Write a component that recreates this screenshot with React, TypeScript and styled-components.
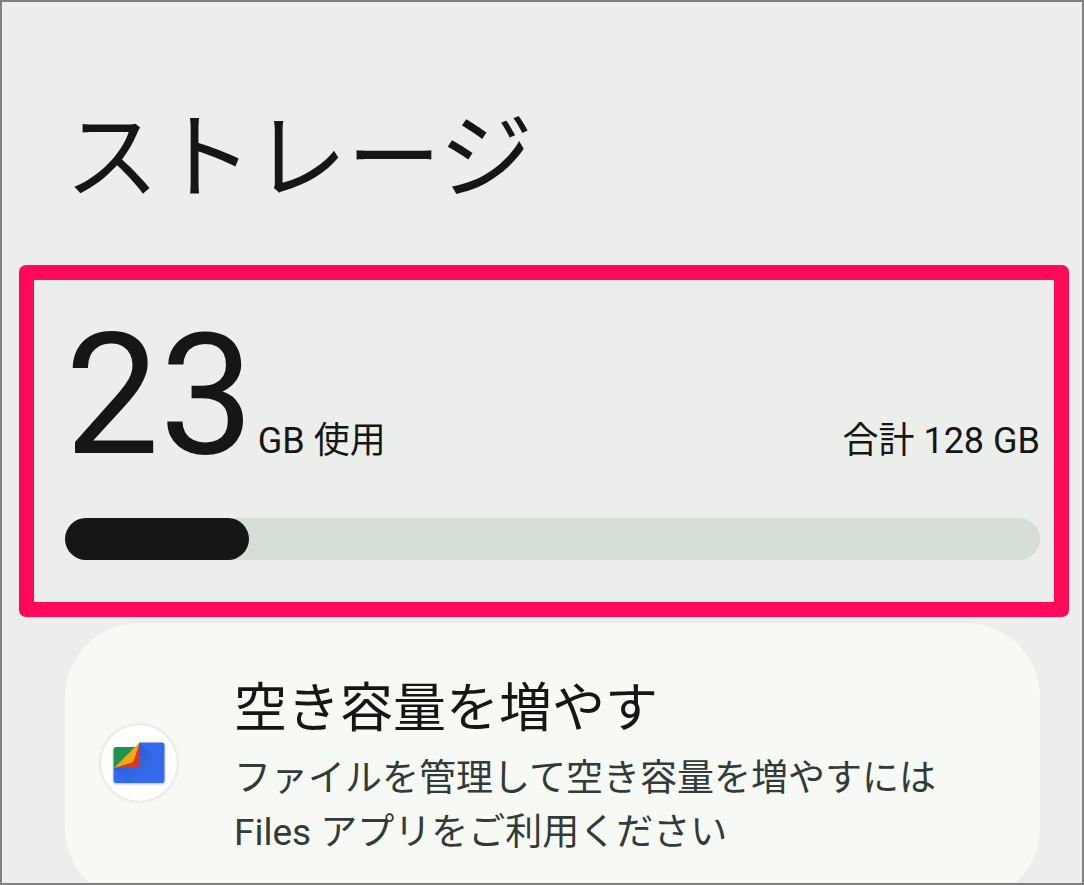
import React from "react";
import styled, { createGlobalStyle } from "styled-components";

const GlobalStyle = createGlobalStyle`
  * { box-sizing: border-box; }
  body {
    margin: 0;
    background: #ebeeeb;
    font-family: Roboto, "Noto Sans CJK JP", sans-serif;
    color: #151715;
  }
`;

const Screen = styled.main`
  height: 100vh;
  overflow: hidden;
  border: 2px solid #808080;
  background: #ebeeeb;
`;

const PageTitle = styled.h1`
  margin: 0;
  padding: 88px 63px 55px;
  font-family: "Noto Sans CJK JP", sans-serif;
  font-size: 94px;
  font-weight: 400;
  line-height: 120px;
`;

const Usage = styled.section`
  margin: 0 13px 0 17px;
  padding: 36px 14px 42px 31px;
  border: 15px solid #ff0a5a;
  border-radius: 7px;
`;

const Figures = styled.div`
  display: flex;
  align-items: baseline;
  justify-content: space-between;
  margin-bottom: 42px;
  font-size: 36px;
  line-height: 40px;
`;

const Figure = styled.p`
  display: flex;
  align-items: baseline;
  gap: 4px;
  margin: 0;
  white-space: nowrap;
`;

const UsedAmount = styled.span`
  font-size: 168px;
  line-height: 160px;
`;

const Track = styled.div`
  height: 42px;
  border-radius: 21px;
  background: #d5dfd7;
`;

const Fill = styled.div`
  height: 100%;
  border-radius: 21px;
  background: #151715;
`;

const Card = styled.a`
  display: flex;
  align-items: center;
  gap: 57px;
  margin: 6px 42px 0 63px;
  padding: 42px 36px;
  border-radius: 74px;
  background: #f7f9f4;
  color: inherit;
  text-decoration: none;
`;

const IconDisc = styled.span`
  flex: none;
  display: flex;
  width: 76px;
  height: 76px;
  border-radius: 50%;
  background: #ffffff;
  box-shadow: 0 0 4px rgba(0, 0, 0, 0.16);
`;

const CardTitle = styled.h2`
  margin: 0 0 9px;
  font-family: "Noto Sans CJK JP", sans-serif;
  font-size: 53px;
  font-weight: 400;
  line-height: 78px;
`;

const CardText = styled.p`
  margin: 0;
  font-size: 37px;
  line-height: 54px;
  color: #323b38;
`;

const FilesIcon = () => (
  <svg width="76" height="76" viewBox="0 0 76 76" aria-hidden="true">
    <defs>
      <linearGradient id="foldShade" x1="0" y1="0" x2="1" y2="1">
        <stop offset="0.2" stopColor="#1c4ab4" stopOpacity="0.5" />
        <stop offset="0.7" stopColor="#1c4ab4" stopOpacity="0" />
      </linearGradient>
      <filter id="sheetShadow" x="-20%" y="-20%" width="140%" height="150%">
        <feDropShadow dx="0" dy="1" stdDeviation="1" floodOpacity="0.3" />
      </filter>
    </defs>
    <g filter="url(#sheetShadow)">
      <path d="M15 22H36L30 43H12.5V24.500Q12.500 22 15 22Z" fill="#21924f" />
      <path
        d="M38.500 17.500H61Q63.500 17.500 63.500 20V55.500Q63.500 58 61 58H15Q12.500 58 12.500 55.500V43L30 40Z"
        fill="#366bec"
      />
    </g>
    <path d="M38.500 17.500L63 42V55.500L61 58H28L13 43L36 41Z" fill="url(#foldShade)" />
    <path d="M38.500 17.500V40.500Q38.500 43 36 43H13L30 36Z" fill="#d23a30" />
    <path d="M38.500 17.500L33.500 34Q32.600 37 29.500 38L13 43Z" fill="#f0a914" />
  </svg>
);

const TOTAL_GB = 128;
const USED_GB = 23;
const BAR_PERCENT = 18.9;

export default function App() {
  return (
    <>
      <GlobalStyle />
      <Screen lang="ja">
        <PageTitle>ストレージ</PageTitle>
        <Usage>
          <Figures>
            <Figure>
              <UsedAmount>{USED_GB}</UsedAmount>
              <span>GB 使用</span>
            </Figure>
            <Figure>
              <span>合計 {TOTAL_GB} GB</span>
            </Figure>
          </Figures>
          <Track
            role="progressbar"
            aria-label="ストレージ"
            aria-valuemin={0}
            aria-valuemax={TOTAL_GB}
            aria-valuenow={USED_GB}
          >
            <Fill style={{ width: `${BAR_PERCENT}%` }} />
          </Track>
        </Usage>
        <Card href="#files">
          <IconDisc>
            <FilesIcon />
          </IconDisc>
          <div>
            <CardTitle>空き容量を増やす</CardTitle>
            <CardText>
              ファイルを管理して空き容量を増やすには
              <br />
              Files アプリをご利用ください
            </CardText>
          </div>
        </Card>
      </Screen>
    </>
  );
}
